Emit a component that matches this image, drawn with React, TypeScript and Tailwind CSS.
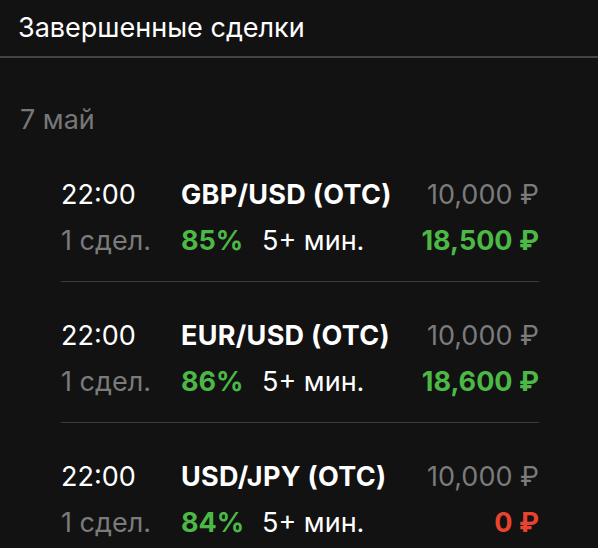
import React from 'react';

interface Deal {
    pair: string;
    time: string;
    stake: string;
    percent: string;
    payout: string;
    won: boolean;
}

const deals: Deal[] = [
    { pair: 'GBP/USD (OTC)', time: '22:00', stake: '10,000 ₽', percent: '85%', payout: '18,500 ₽', won: true },
    { pair: 'EUR/USD (OTC)', time: '22:00', stake: '10,000 ₽', percent: '86%', payout: '18,600 ₽', won: true },
    { pair: 'USD/JPY (OTC)', time: '22:00', stake: '10,000 ₽', percent: '84%', payout: '0 ₽', won: false }
];

const DealRow = ({ deal, last }: { deal: Deal; last: boolean }) => (
    <div className={`pt-[37px] ${last ? '' : 'pb-[23px] border-b border-[#3c3c3c]'}`}>
        <div className="flex items-center h-[34px]">
            <span className="w-[120px] text-white">{deal.time}</span>
            <span className="flex-1 font-bold tracking-[0.3px] text-white">{deal.pair}</span>
            <span className="text-[#7b7b7b]">{deal.stake}</span>
        </div>
        <div className="flex items-center h-[34px] mt-[12px]">
            <span className="w-[120px] text-[#7b7b7b]">1 сдел.</span>
            <span className="w-[81px] font-bold text-[#4cb846]">{deal.percent}</span>
            <span className="flex-1 text-white">5+ мин.</span>
            <span className={`font-bold ${deal.won ? 'text-[#4cb846]' : 'text-[#e8432e]'}`}>{deal.payout}</span>
        </div>
    </div>
);

export default function App() {
    return (
        <div className="w-full h-[548px] bg-[#121212] overflow-hidden text-[27px] leading-[34px] font-['Inter',sans-serif]">
            <div className="h-[58px] px-[18px] flex items-center border-b-2 border-[#444] text-white">
                Завершенные сделки
            </div>
            <div className="px-[20px] mt-[45px] mb-[4px] h-[34px] text-[#777]">7 май</div>
            <div className="pl-[61px] pr-[59px]">
                {deals.map((d, i) => (
                    <DealRow key={i} deal={d} last={i === deals.length - 1} />
                ))}
            </div>
        </div>
    );
}
